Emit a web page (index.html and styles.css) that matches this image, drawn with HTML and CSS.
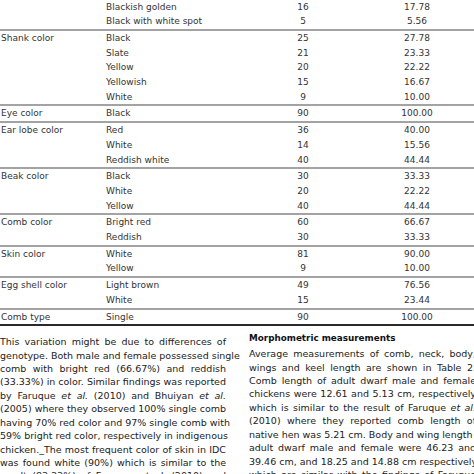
FILE: index.html
```html
<!DOCTYPE html>
<html>
<head>
<meta charset="utf-8">
<link rel="stylesheet" href="styles.css">
</head>
<body>
<div class="page">
<table class="data">
<colgroup><col class="c1"><col class="c2"><col class="c3"><col class="c4"></colgroup>
<tbody>
<tr class="first"><td></td><td>Blackish golden</td><td>16</td><td>17.78</td></tr>
<tr><td></td><td>Black with white spot</td><td>5</td><td>5.56</td></tr>
<tr class="grp"><td>Shank color</td><td>Black</td><td>25</td><td>27.78</td></tr>
<tr><td></td><td>Slate</td><td>21</td><td>23.33</td></tr>
<tr><td></td><td>Yellow</td><td>20</td><td>22.22</td></tr>
<tr><td></td><td>Yellowish</td><td>15</td><td>16.67</td></tr>
<tr><td></td><td>White</td><td>9</td><td>10.00</td></tr>
<tr class="grp"><td>Eye color</td><td>Black</td><td>90</td><td>100.00</td></tr>
<tr class="grp"><td>Ear lobe color</td><td>Red</td><td>36</td><td>40.00</td></tr>
<tr><td></td><td>White</td><td>14</td><td>15.56</td></tr>
<tr><td></td><td>Reddish white</td><td>40</td><td>44.44</td></tr>
<tr class="grp"><td>Beak color</td><td>Black</td><td>30</td><td>33.33</td></tr>
<tr><td></td><td>White</td><td>20</td><td>22.22</td></tr>
<tr><td></td><td>Yellow</td><td>40</td><td>44.44</td></tr>
<tr class="grp"><td>Comb color</td><td>Bright red</td><td>60</td><td>66.67</td></tr>
<tr><td></td><td>Reddish</td><td>30</td><td>33.33</td></tr>
<tr class="grp"><td>Skin color</td><td>White</td><td>81</td><td>90.00</td></tr>
<tr><td></td><td>Yellow</td><td>9</td><td>10.00</td></tr>
<tr class="grp"><td>Egg shell color</td><td>Light brown</td><td>49</td><td>76.56</td></tr>
<tr><td></td><td>White</td><td>15</td><td>23.44</td></tr>
<tr class="grp last"><td>Comb type</td><td>Single</td><td>90</td><td>100.00</td></tr>
</tbody>
</table>
<div class="text">
<div class="col left">
<span class="ln">This variation might be due to differences of</span>
<span class="ln">genotype. Both male and female possessed single</span>
<span class="ln">comb with bright red (66.67%) and reddish</span>
<span class="ln">(33.33%) in color. Similar findings was reported</span>
<span class="ln">by Faruque <i>et al.</i> (2010) and Bhuiyan <i>et al.</i></span>
<span class="ln">(2005) where they observed 100% single comb</span>
<span class="ln">having 70% red color and 97% single comb with</span>
<span class="ln">59% bright red color, respectively in indigenous</span>
<span class="ln">chicken._The most frequent color of skin in IDC</span>
<span class="ln">was found white (90%) which is similar to the</span>
<span class="ln">result (83.33%) of Faruque <i>et al.</i> (2010) and</span>
</div>
<div class="col right">
<h2 class="head">Morphometric measurements</h2>
<span class="ln">Average measurements of comb, neck, body,</span>
<span class="ln">wings and keel length are shown in Table 2.</span>
<span class="ln">Comb length of adult dwarf male and female</span>
<span class="ln">chickens were 12.61 and 5.13 cm, respectively</span>
<span class="ln">which is similar to the result of Faruque <i>et al.</i></span>
<span class="ln">(2010) where they reported comb length of</span>
<span class="ln">native hen was 5.21 cm. Body and wing length of</span>
<span class="ln">adult dwarf male and female were 46.23 and</span>
<span class="ln">39.46 cm, and 18.25 and 14.88 cm respectively</span>
<span class="ln">which are similar with the findings of Faruque</span>
</div>
</div>
</div>
</body>
</html>
```
FILE: styles.css
```css
html, body {
  margin: 0;
  padding: 0;
  background: #ffffff;
  overflow: hidden;
}
.page {
  width: 480px;
  height: 474px;
  overflow: hidden;
  font-family: "DejaVu Sans", Verdana, sans-serif;
}
.data {
  border-collapse: separate;
  border-spacing: 0;
  width: 478px;
  table-layout: fixed;
  margin-top: -0.5px;
  font-size: 9px;
  color: #333333;
}
.c1 { width: 106px; }
.c2 { width: 144px; }
.c3 { width: 106px; }
.c4 { width: 122px; }
.data td {
  box-sizing: border-box;
  height: 14.7px;
  padding: 0;
  line-height: 14.7px;
  white-space: nowrap;
  vertical-align: middle;
}
.data td:nth-child(1) { padding-left: 1px; }
.data td:nth-child(3), .data td:nth-child(4) { text-align: center; }
.data tr.grp td { border-top: 2px solid #a3a3a3; height: 16.7px; }
.data tr.last td { border-bottom: 2px solid #2a2a2a; height: 18.7px; }
.text {
  display: grid;
  grid-template-columns: 226px 227px;
  column-gap: 23px;
  margin-top: 6px;
  font-size: 9.5px;
  color: #222222;
}
.col { display: flex; flex-direction: column; }
.left { padding-top: 3px; }
.ln {
  display: block;
  line-height: 13.4px;
  text-align: justify;
  text-align-last: justify;
  white-space: nowrap;
}
.head {
  margin: 0 0 1.6px 0;
  font-size: 8.8px;
  line-height: 13.4px;
  font-weight: bold;
  color: #111111;
}
```
